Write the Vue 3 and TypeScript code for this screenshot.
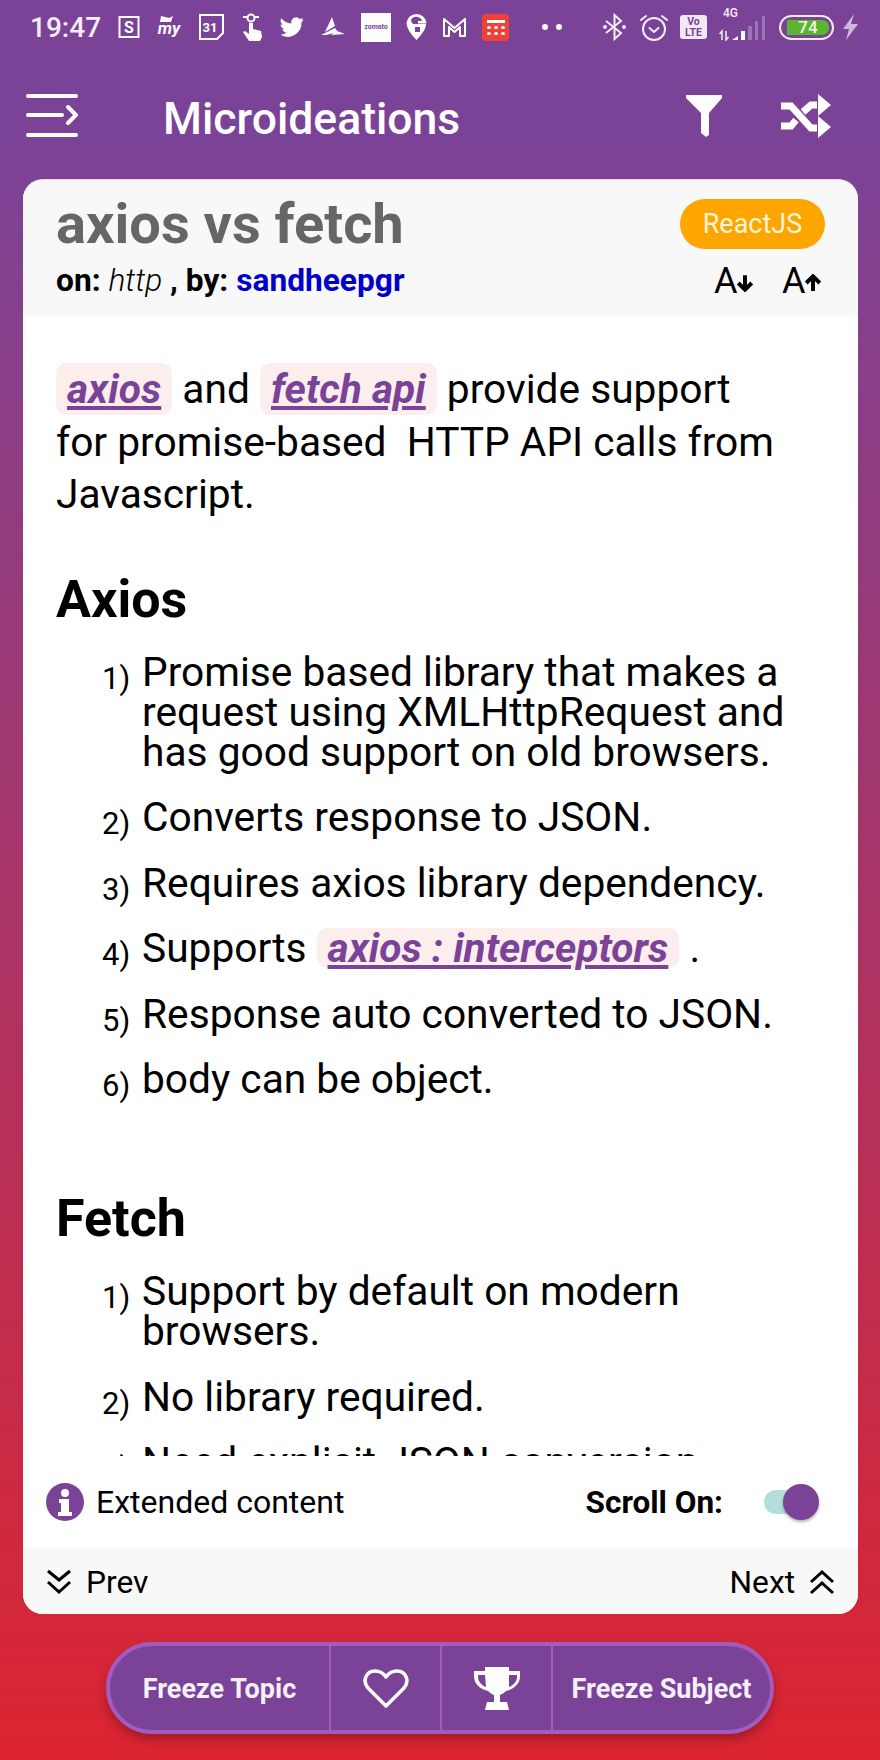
<script setup lang="ts">
interface Item {
  before: string
  link?: string
  after?: string
}

const axiosItems: Item[] = [
  { before: 'Promise based library that makes a request using XMLHttpRequest and has good support on old browsers.' },
  { before: 'Converts response to JSON.' },
  { before: 'Requires axios library dependency.' },
  { before: 'Supports', link: 'axios : interceptors', after: '.' },
  { before: 'Response auto converted to JSON.' },
  { before: 'body can be object.' },
]

const fetchItems: Item[] = [
  { before: 'Support by default on modern browsers.' },
  { before: 'No library required.' },
  { before: 'Need explicit JSON conversion.' },
]
</script>

<template>
  <div class="screen">
    <div class="status">
      <span class="time">19:47</span>
      <div class="notif">
        <svg width="22" height="24" viewBox="0 0 22 24"><path d="M1.5 2h19v20h-19z" fill="none" stroke="#fff" stroke-width="2"/><text x="11" y="18" text-anchor="middle" class="glyph" font-size="16" font-weight="700">S</text></svg>
        <svg width="28" height="28" viewBox="0 0 28 28"><path d="M6 3l8 2 4-2-2 6H5z" fill="#fff"/><text x="14" y="21" text-anchor="middle" class="glyph" font-size="17" font-weight="700" font-style="italic">my</text></svg>
        <svg width="27" height="28" viewBox="0 0 27 28"><path d="M2 2h23v18l-6 6H2z" fill="none" stroke="#fff" stroke-width="2"/><text x="12" y="19" text-anchor="middle" class="glyph" font-size="13" font-weight="700">31</text></svg>
        <svg width="24" height="28" viewBox="0 0 24 28" fill="#fff"><path d="M9 10h4v6l8 2 1 6-2 4H9l-6-9 2-1 4 3z"/><circle cx="11" cy="5" r="3.5" fill="none" stroke="#fff" stroke-width="2"/><path d="M3 4h4M15 4h4" stroke="#fff" stroke-width="2"/></svg>
        <svg width="26" height="24" viewBox="0 0 24 24" fill="#fff"><path d="M23.6 4.6c-.9.4-1.8.6-2.8.8 1-.6 1.800-1.500 2.100-2.700-.9.6-2 1-3.100 1.200a4.900 4.900 0 0 0-8.400 4.500C7.300 8.200 3.700 6.200 1.300 3.200a4.900 4.900 0 0 0 1.500 6.600c-.8 0-1.500-.2-2.200-.6 0 2.400 1.700 4.400 3.900 4.900-.7.2-1.500.2-2.200.1.600 2 2.400 3.400 4.600 3.400A9.900 9.900 0 0 1 0 19.600 14 14 0 0 0 21.500 7.200c1-.7 1.800-1.600 2.100-2.600z"/></svg>
        <svg width="26" height="24" viewBox="0 0 26 24" fill="#fff"><path d="M12 2l3 9-10 6z"/><path d="M15 13l3 4-12 3-5 0zM17 16l8 3-14 1z"/></svg>
        <div class="zomato">zomato</div>
        <svg width="21" height="28" viewBox="0 0 21 28" fill="#fff"><path d="M10.500 1a10 10 0 0 1 10 9.500H12V8h4a6 6 0 0 0-11-1 5 5 0 0 0 2 4h13c0 6-6 12-9.500 16C7 23 1 17 .5 10a10 10 0 0 1 10-9z"/><path d="M9 14h5v5H9z" fill="#7b4397"/></svg>
        <svg width="25" height="22" viewBox="0 0 25 22"><path d="M2 20V3l10.500 9L23 3v17h-5V11l-5.500 5L7 11v9z" fill="none" stroke="#fff" stroke-width="2" stroke-linejoin="round"/></svg>
        <div class="red-tile"><i class="dash"></i><i v-for="n in 6" :key="n" class="pip"></i></div>
      </div>
      <div class="more"><i></i><i></i></div>
      <div class="system">
        <svg width="23" height="28" viewBox="0 0 23 28" fill="none" stroke="#f4eef8" stroke-width="2"><path d="M3 8l15 12-6.500 6V2L18 8 3 20"/><circle cx="2" cy="14" r="1" fill="#f4eef8"/><circle cx="21" cy="14" r="1" fill="#f4eef8"/></svg>
        <svg width="28" height="28" viewBox="0 0 28 28" fill="none" stroke="#f4eef8" stroke-width="2"><circle cx="14" cy="16" r="11"/><path d="M9.500 15l4.500 4 4.500-4M1 7l5-4M27 7l-5-4" stroke-linecap="round"/></svg>
        <div class="volte">Vo<br />LTE</div>
        <div class="network">
          <span class="fourg">4G</span>
          <svg width="47" height="25" viewBox="0 0 47 25"><path d="M3 24v-9l-2.500 3M7 15v9l2.500-3" fill="none" stroke="#f4eef8" stroke-width="1.500"/><path d="M13 24l6-4v4z" fill="#fff"/><path d="M22 24v-9h4v9z" fill="#fff"/><path d="M29 24V10h4v14zM36 24V5h3v19zM43 24V0h3v24z" fill="#9a76b4"/></svg>
        </div>
        <div class="battery"><div class="level"><span>74</span></div></div>
        <svg width="17" height="26" viewBox="0 0 17 26" fill="#cdbada"><path d="M12 0L1 15h6l-3 11 12-16H9z"/></svg>
      </div>
    </div>

    <header class="toolbar">
      <svg class="menu" width="52" height="44" viewBox="0 0 52 44" fill="none" stroke="#fff" stroke-width="4" stroke-linecap="round"><path d="M2 2h48M2 21h34M2 41h48M42 13l8 8-8 8"/></svg>
      <h1>Microideations</h1>
      <svg class="filter" width="38" height="42" viewBox="0 0 38 42" fill="#fff"><path d="M1 0h36v3L24 18v22l-3 2-5-4V18L1 3z"/></svg>
      <svg class="shuffle" width="50" height="44" viewBox="0 0 50 44" fill="none" stroke="#fff" stroke-width="7"><path d="M0 12h10l20 22h6M0 32h10l5-6M22 18l8-7h6"/><path d="M37 0l13 11-13 11zM37 22l13 11-13 11z" fill="#fff" stroke="none"/></svg>
    </header>

    <main class="card">
      <section class="head">
        <div>
          <h2>axios vs fetch</h2>
          <p class="meta">on: <em>http</em> , by: <a>sandheepgr</a></p>
        </div>
        <div class="tools">
          <span class="badge">ReactJS</span>
          <div class="sizes">
            <span class="size">A<svg width="18" height="18" viewBox="0 0 16 16" fill="none" stroke="#000" stroke-width="3.500"><path d="M8 1v13M2 8l6 6 6-6"/></svg></span>
            <span class="size">A<svg width="18" height="18" viewBox="0 0 16 16" fill="none" stroke="#000" stroke-width="3.500"><path d="M8 15V2M2 8l6-6 6 6"/></svg></span>
          </div>
        </div>
      </section>

      <section class="content">
        <p class="intro"><a class="chip">axios</a> and <a class="chip">fetch api</a> provide support for promise-based&nbsp; HTTP API calls from Javascript.</p>

        <h3 class="first">Axios</h3>
        <ol>
          <li v-for="(item, i) in axiosItems" :key="i">
            <span class="num">{{ i + 1 }})</span>
            <span class="txt">{{ item.before }}<template v-if="item.link"> <a class="chip">{{ item.link }}</a> {{ item.after }}</template></span>
          </li>
        </ol>

        <h3 class="second">Fetch</h3>
        <ol>
          <li v-for="(item, i) in fetchItems" :key="i">
            <span class="num">{{ i + 1 }})</span>
            <span class="txt">{{ item.before }}</span>
          </li>
        </ol>
      </section>

      <section class="extra">
        <svg width="38" height="38" viewBox="0 0 38 38"><circle cx="19" cy="19" r="19" fill="#7b4397"/><circle cx="19" cy="10" r="4" fill="#fff"/><path d="M13 16h10v13h3v4H12v-4h3v-9h-2z" fill="#fff"/></svg>
        <span class="label">Extended content</span>
        <b>Scroll On:</b>
        <div class="switch"><i></i></div>
      </section>

      <nav class="pager">
        <span class="page-link">
          <svg width="26" height="26" viewBox="0 0 26 26" fill="none" stroke="#000" stroke-width="3"><path d="M2 2l11 9 11-9M2 13l11 10 11-10"/></svg>
          Prev
        </span>
        <span class="page-link">
          Next
          <svg width="26" height="26" viewBox="0 0 26 26" fill="none" stroke="#000" stroke-width="3"><path d="M2 24l11-10 11 10M2 13L13 3l11 10"/></svg>
        </span>
      </nav>
    </main>

    <div class="dock">
      <button class="wide">Freeze Topic</button>
      <button class="icon">
        <svg width="46" height="40" viewBox="0 0 46 40" fill="none" stroke="#fff" stroke-width="3.500" stroke-linejoin="round"><path d="M23 37L5 19C-1 12 3 2 12 2c5 0 9 3 11 6 2-3 6-6 11-6 9 0 13 10 7 17z"/></svg>
      </button>
      <button class="icon">
        <svg width="48" height="44" viewBox="0 0 48 44" fill="#fff"><path d="M12 0h24v4h11v5c0 8-6 13-14 15-2 2-4 3-6 4v7h7l2 8H12l2-8h7v-7c-2-1-4-2-6-4C7 22 1 17 1 9V4h11zm0 8H5v2c0 4 3 8 8 10zm24 0v12c5-2 8-6 8-10V8z"/></svg>
      </button>
      <button class="wide">Freeze Subject</button>
    </div>
  </div>
</template>

<style>
html,
body {
  margin: 0;
  padding: 0;
}
</style>

<style scoped>
.screen {
  width: 880px;
  height: 1760px;
  display: flex;
  flex-direction: column;
  overflow: hidden;
  background: linear-gradient(180deg, #7b4397 0%, #7b4397 8%, #dc2430 100%);
  font-family: Roboto, "Liberation Sans", sans-serif;
  color: #000;
}

/* status bar */
.status {
  height: 54px;
  flex: none;
  display: flex;
  align-items: center;
  padding-left: 30px;
  color: #f4eef8;
}
.time {
  font-size: 28px;
  font-weight: 500;
  width: 88px;
}
.notif {
  display: flex;
  align-items: center;
  gap: 15px;
  width: 424px;
}
.glyph {
  fill: #fff;
  font-family: Roboto, sans-serif;
}
.zomato {
  width: 30px;
  height: 29px;
  background: #fff;
  color: #7b4397;
  font-size: 7px;
  font-weight: 700;
  line-height: 29px;
  text-align: center;
}
.red-tile {
  width: 27px;
  height: 27px;
  border-radius: 4px;
  background: #ef4136;
  display: grid;
  grid-template-columns: repeat(3, 4px);
  justify-content: center;
  align-content: center;
  gap: 3px;
}
.dash {
  grid-column: 1 / 4;
  height: 3px;
  background: #fff;
}
.pip {
  height: 3px;
  background: #fff;
  border-radius: 50%;
}
.more {
  display: flex;
  gap: 8px;
  width: 61px;
}
.more i {
  width: 6px;
  height: 6px;
  border-radius: 50%;
  background: #fff;
}
.system {
  display: flex;
  align-items: center;
}
.system > svg:first-child {
  margin-right: 14px;
}
.volte {
  width: 27px;
  height: 24px;
  margin-left: 12px;
  border-radius: 3px;
  background: #f1eaf5;
  color: #7b4397;
  font-size: 10.500px;
  font-weight: 700;
  line-height: 11px;
  text-align: center;
  padding-top: 1px;
  box-sizing: border-box;
}
.network {
  position: relative;
  width: 47px;
  height: 25px;
  margin-left: 12px;
  margin-top: 2px;
}
.fourg {
  position: absolute;
  left: 4px;
  top: -10px;
  font-size: 12px;
  font-weight: 500;
  color: #f4eef8;
}
.network svg {
  display: block;
}
.battery {
  width: 55px;
  height: 25px;
  margin-left: 13px;
  margin-right: 8px;
  box-sizing: border-box;
  border: 2px solid #f1eaf5;
  border-radius: 13px;
  padding: 3px 4px;
}
.level {
  width: 42px;
  height: 15px;
  margin-left: 2px;
  background: #5cb531;
  border-radius: 0 7px 7px 0;
  color: #f4f4e4;
  font-size: 17px;
  font-weight: 500;
  line-height: 15px;
  text-align: center;
}

/* toolbar */
.toolbar {
  height: 125px;
  flex: none;
  display: flex;
  align-items: center;
  padding: 0 49px 2px 26px;
  color: #fff;
  box-sizing: border-box;
}
.toolbar h1 {
  margin: 6px 0 0 85px;
  flex: 1;
  font-size: 44.500px;
  font-weight: 500;
}
.filter {
  margin-right: 58px;
}

/* card */
.card {
  height: 1435px;
  flex: none;
  margin: 0 22px 0 23px;
  display: flex;
  flex-direction: column;
  overflow: hidden;
  border-radius: 20px;
  background: #fff;
  border-top: 1px solid #ecd3f0;
  box-sizing: border-box;
}
.head {
  height: 136px;
  flex: none;
  display: flex;
  justify-content: space-between;
  padding: 11px 23px 0 33px;
  box-sizing: border-box;
  background: #f8f8f8;
}
.head h2 {
  margin: 0;
  font-size: 56px;
  line-height: 66px;
  font-weight: 700;
  color: #666;
}
.meta {
  margin: 6px 0 0;
  font-size: 31.700px;
  line-height: 36px;
  font-weight: 700;
}
.meta em {
  font-weight: 300;
}
.meta a {
  color: #0000cc;
}
.tools {
  display: flex;
  flex-direction: column;
  align-items: flex-end;
  padding-top: 8px;
  margin-right: 10px;
}
.badge {
  width: 145px;
  height: 50px;
  border-radius: 25px;
  background: #ffa500;
  color: #fff6d8;
  font-size: 27px;
  line-height: 50px;
  text-align: center;
}
.sizes {
  display: flex;
  gap: 27px;
  margin-top: 11px;
  margin-right: 2px;
}
.size {
  display: flex;
  align-items: center;
  font-size: 36px;
  line-height: 42px;
  width: 41px;
}
.size svg {
  margin-top: 3px;
  margin-left: -1px;
}

.content {
  flex: 1;
  min-height: 0;
  overflow: hidden;
  padding: 47px 40px 0 33px;
}
.intro {
  margin: 0;
  padding-right: 38px;
  font-size: 40.700px;
  line-height: 52.500px;
}
.chip {
  background: #fdeeee;
  border-radius: 10px;
  color: #7b4397;
  font-style: italic;
  font-weight: 700;
  text-decoration: underline;
  padding: 2px 11px;
}
.txt .chip {
  display: inline-block;
  padding: 0 11px;
  margin-left: 10px;
  line-height: 40px;
}
h3 {
  margin: 0;
  font-size: 52px;
  line-height: 60px;
  font-weight: 700;
}
h3.first {
  margin-top: 49px;
}
h3.second {
  margin-top: 90px;
}
ol {
  list-style: none;
  margin: 22px 0 0;
  padding: 0 0 0 46px;
}
li {
  display: flex;
  margin-bottom: 25.500px;
}
.num {
  width: 40px;
  flex: none;
  font-size: 31px;
  line-height: 40px;
  padding-top: 7px;
  box-sizing: border-box;
  height: 40px;
}
.txt {
  font-size: 40.700px;
  line-height: 40px;
}

.extra {
  height: 92px;
  flex: none;
  display: flex;
  align-items: center;
  padding: 0 38px 0 23px;
  background: #fff;
}
.label {
  flex: 1;
  margin-left: 12px;
  font-size: 32px;
}
.extra b {
  font-size: 31.500px;
  font-weight: 700;
  margin-right: 41px;
}
.switch {
  position: relative;
  width: 52px;
  height: 24px;
  margin-right: 4px;
  border-radius: 12px;
  background: #b2dfdb;
}
.switch i {
  position: absolute;
  right: -3px;
  top: -6px;
  width: 36px;
  height: 36px;
  border-radius: 50%;
  background: #7b4397;
  box-shadow: 0 2px 3px rgba(0, 0, 0, 0.3);
}
.pager {
  height: 66px;
  flex: none;
  display: flex;
  justify-content: space-between;
  align-items: center;
  padding: 2px 23px 0 23px;
  background: #f8f8f8;
  font-size: 31.700px;
  box-sizing: border-box;
}
.page-link {
  display: flex;
  align-items: center;
  gap: 14px;
}

/* bottom dock */
.dock {
  align-self: center;
  margin-top: 28px;
  width: 668px;
  height: 92px;
  flex: none;
  display: flex;
  box-sizing: border-box;
  border: 4px solid #a35bbf;
  border-radius: 46px;
  background: #7b4397;
  box-shadow: 0 6px 10px rgba(0, 0, 0, 0.25);
  overflow: hidden;
}
.dock button {
  margin: 0;
  padding: 2px 0 0;
  border: 0;
  background: none;
  color: #f6f0fa;
  font-family: inherit;
  font-size: 27px;
  font-weight: 700;
  display: flex;
  align-items: center;
  justify-content: center;
}
.dock button + button {
  border-left: 2px solid #a35bbf;
}
.dock .wide:first-child {
  width: 219px;
}
.dock .wide:last-child {
  flex: 1;
}
.dock .icon {
  width: 111px;
}
</style>
